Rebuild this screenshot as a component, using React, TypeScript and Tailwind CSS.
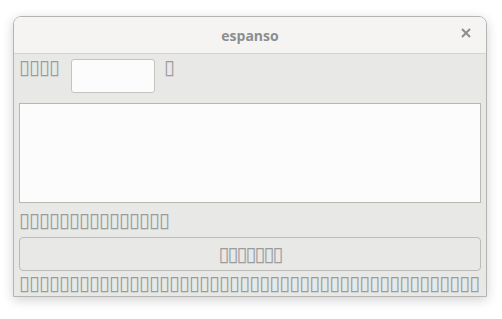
import React from "react";

const Tofu = ({ n, className = "" }: { n: number; className?: string }) => (
  <span
    className={"whitespace-nowrap text-[#9a9c9d] text-[20px] leading-[16px] antialiased " + className}
    style={{ fontFamily: '"DejaVu Sans", sans-serif' }}
  >
    {"\u25AF".repeat(n)}
  </span>
);

export default function App() {
  return (
    <div className="w-[502px] h-[319px] bg-white pt-[16px] pl-[13px]">
      <div className="w-[474px] h-[281px] flex flex-col border border-[#b4b4b2] rounded-t-[8px] overflow-hidden shadow-[0_3px_12px_rgba(0,0,0,0.18)]">
        <div className="h-[37px] shrink-0 bg-[#f5f4f2] border-b border-[#d6d4d0] flex items-center justify-center relative">
          <span
            className="text-[14px] font-bold text-[#8b8e8f]"
            style={{ fontFamily: '"Open Sans", sans-serif' }}
          >
            espanso
          </span>
          <span className="absolute right-[14px] top-[10px] text-[#8b8e8f]">
            <svg width="12" height="12" viewBox="0 0 12 12">
              <path d="M2 2 L10 10 M10 2 L2 10" stroke="#8b8e8f" strokeWidth="2" />
            </svg>
          </span>
        </div>
        <div className="flex-1 bg-[#e8e8e7] px-[5px] flex flex-col">
          <div className="flex items-start h-[39px] pt-[5px]">
            <Tofu n={4} className="tracking-[-1px]" />
            <div className="ml-[12px] w-[84px] h-[34px] bg-[#fcfcfc] border border-[#c6c4c0] rounded-[3px]" />
            <Tofu n={1} className="ml-[9px]" />
          </div>
          <div className="mt-[10px] h-[100px] bg-[#fcfcfc] border border-[#b8b7b4]" />
          <div className="h-[34px] flex items-center">
            <Tofu n={15} className="tracking-[-1px]" />
          </div>
          <div className="h-[34px] border border-[#bcbbb8] rounded-[4px] flex items-center justify-center bg-[#e8e8e7]">
            <Tofu n={7} className="tracking-[-2px]" />
          </div>
          <div className="flex items-center h-[24px] overflow-hidden">
            <Tofu n={46} className="tracking-[-1px]" />
          </div>
        </div>
      </div>
    </div>
  );
}
